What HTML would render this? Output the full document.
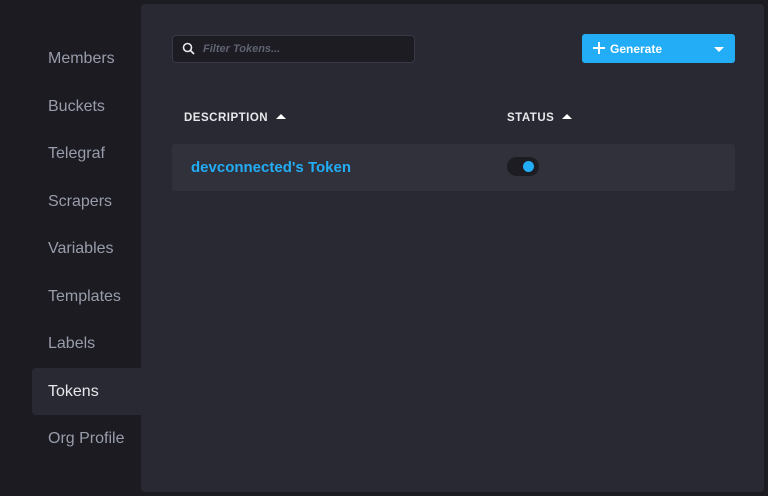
<!DOCTYPE html>
<html><head><style>
body{margin:0;width:768px;height:496px;background:#1b1b21;font-family:"Liberation Sans",sans-serif;position:relative;overflow:hidden}
.nav{position:absolute;left:48px;font-size:16px;color:#999dab;line-height:20px}
.act{position:absolute;left:32px;top:368px;width:115px;height:47px;background:#292933;border-radius:4px 0 0 4px}
.panel{position:absolute;left:141px;top:4px;width:623px;height:488px;background:#292933;border-radius:4px}
.search{position:absolute;left:172px;top:35px;width:241px;height:26px;background:#1c1c22;border:1px solid #383846;border-radius:4px}
.search span{position:absolute;left:30px;top:7px;font-size:11px;font-style:italic;color:#5f6272;font-weight:bold}
.btn{position:absolute;left:582px;top:34px;width:153px;height:29px;background:#22adf6;border-radius:3px;color:#fff;font-size:12px;font-weight:bold}
.th{position:absolute;top:112px;font-size:11.5px;font-weight:bold;color:#e7e8eb;letter-spacing:.5px}
.row{position:absolute;left:172px;top:144px;width:563px;height:47px;background:#31313c;border-radius:3px}
.tok{position:absolute;left:19px;top:15px;font-size:15px;font-weight:bold;color:#22adf6}
.tog{position:absolute;left:335px;top:13px;width:32px;height:19px;background:#1c1c22;border-radius:10px}
.tog i{position:absolute;right:5px;top:4px;width:11px;height:11px;border-radius:50%;background:#22adf6}
.tri{display:inline-block;width:0;height:0;border-left:5px solid transparent;border-right:5px solid transparent;border-bottom:5px solid #fff;margin-left:8px;vertical-align:2px}
</style></head><body>
<div class="act"></div>
<div class="panel"></div>
<div class="nav" style="top:49px">Members</div>
<div class="nav" style="top:97px">Buckets</div>
<div class="nav" style="top:144px">Telegraf</div>
<div class="nav" style="top:192px">Scrapers</div>
<div class="nav" style="top:239px">Variables</div>
<div class="nav" style="top:287px">Templates</div>
<div class="nav" style="top:334px">Labels</div>
<div class="nav" style="top:382px;color:#e7e8eb">Tokens</div>
<div class="nav" style="top:429px">Org Profile</div>
<div class="search"><svg style="position:absolute;left:9px;top:6px" width="14" height="14" viewBox="0 0 14 14"><circle cx="5.5" cy="5.5" r="4" fill="none" stroke="#e7e8eb" stroke-width="1.6"/><path d="M8.5 8.5L12 12" stroke="#e7e8eb" stroke-width="1.8"/></svg><span>Filter Tokens...</span></div>
<div class="btn"><svg style="position:absolute;left:11px;top:8px" width="12" height="12"><path d="M6 0V12M0 6H12" stroke="#fff" stroke-width="2"/></svg><span style="position:absolute;left:28px;top:8px">Generate</span><span style="position:absolute;right:11px;top:13px;border-left:5px solid transparent;border-right:5px solid transparent;border-top:5px solid #fff;width:0;height:0"></span></div>
<div class="th" style="left:184px">DESCRIPTION<span class="tri"></span></div>
<div class="th" style="left:507px">STATUS<span class="tri"></span></div>
<div class="row"><div class="tok">devconnected's Token</div><div class="tog"><i></i></div></div>
</body></html>
